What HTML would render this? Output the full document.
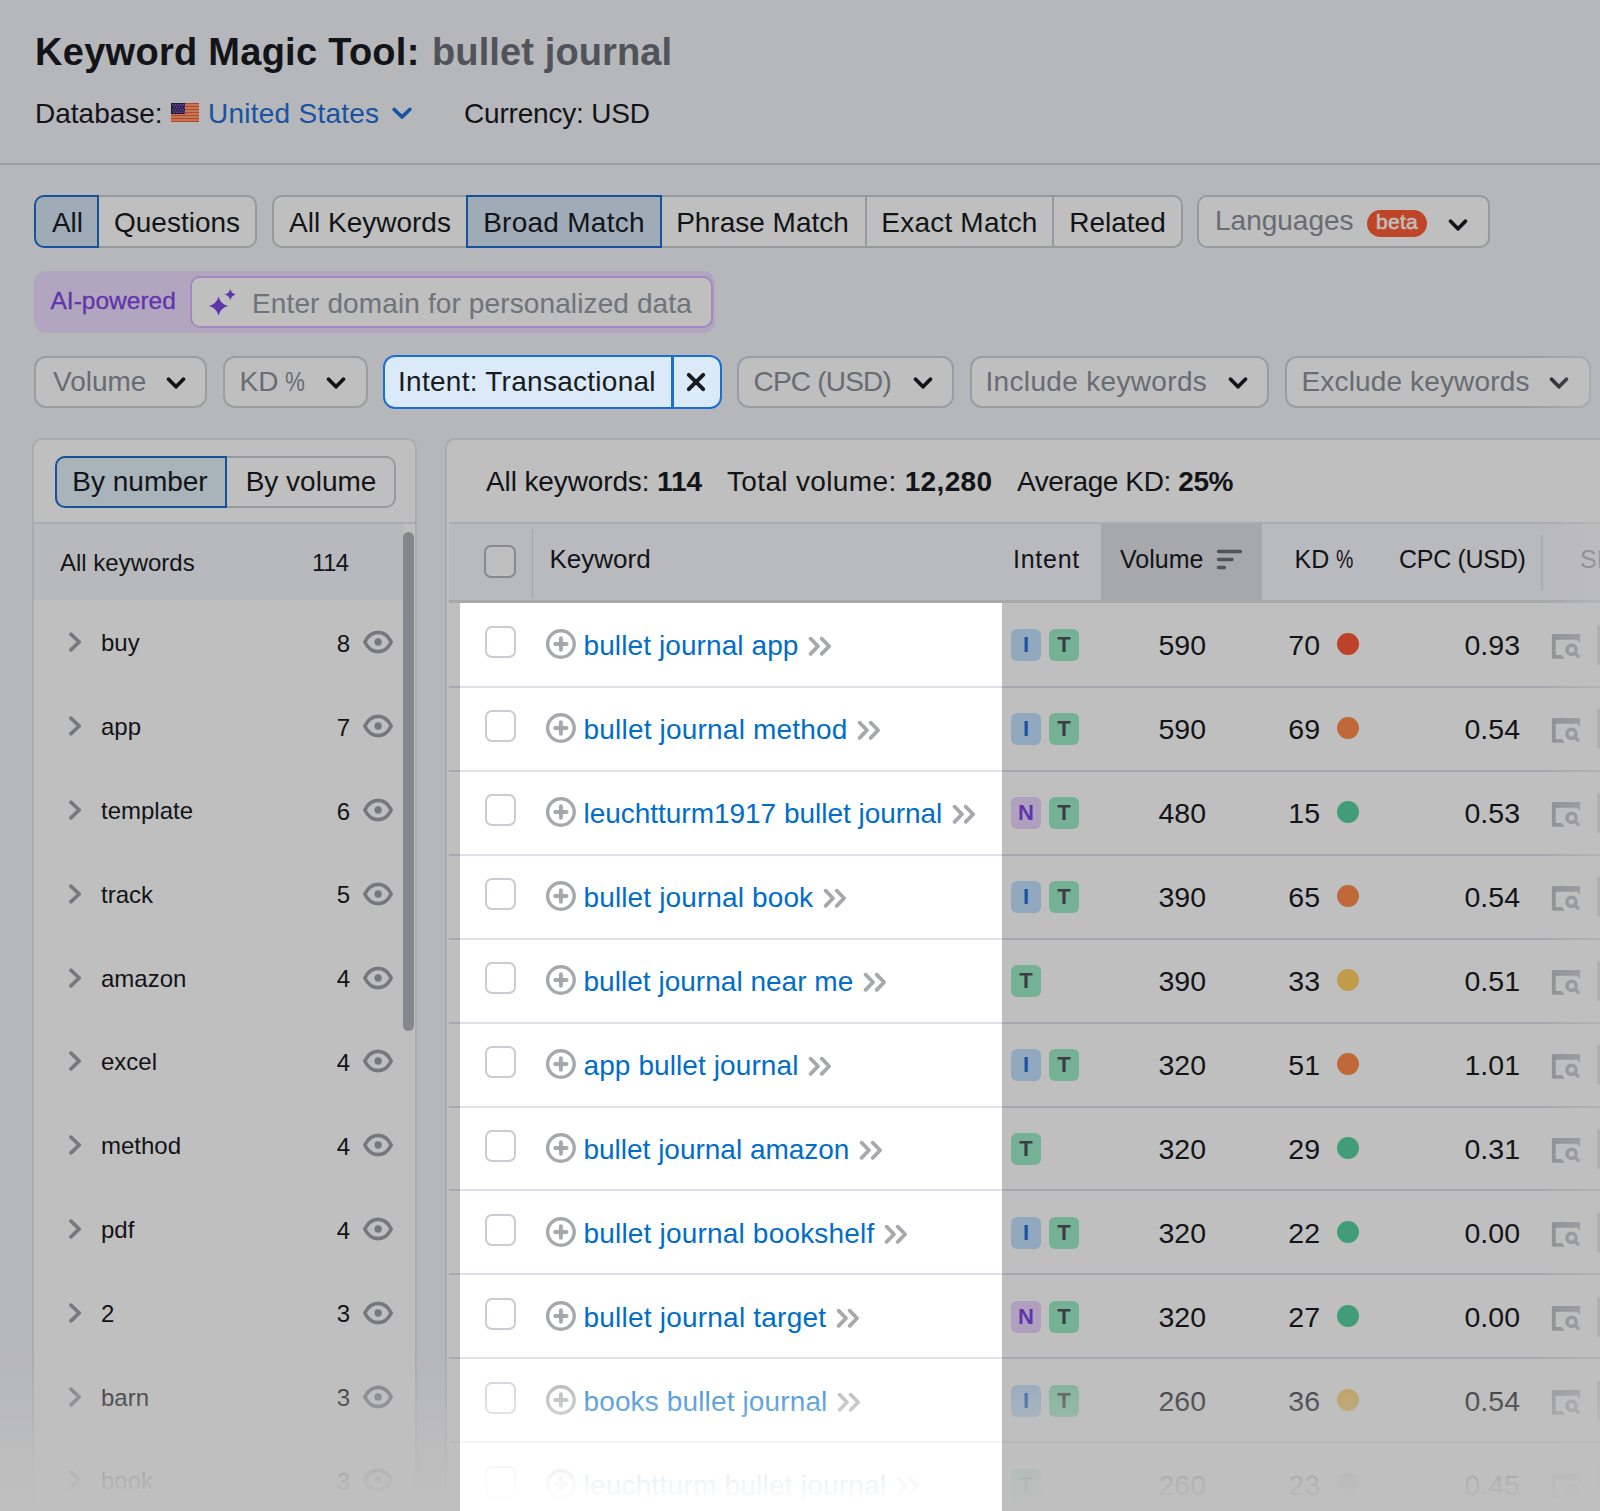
<!DOCTYPE html>
<html><head><meta charset="utf-8">
<style>
*{box-sizing:border-box;margin:0;padding:0}
html,body{width:1600px;height:1511px;overflow:hidden}
body{position:relative;background:#f3f4f9;font-family:"Liberation Sans",sans-serif;color:#191b23}
.a{position:absolute}
.t{position:absolute;white-space:nowrap}
.seg{position:absolute;top:0;height:100%;border:2px solid #c9ccd3;background:#fff;font-size:28px;display:flex;align-items:center;justify-content:center;color:#191b23;padding-top:2px}
.sel{background:#d5e5f5;border-color:#1b6fd0;z-index:2}
.flt{position:absolute;z-index:0;top:356px;height:52px;border:2px solid #cfd2d8;border-radius:12px;background:#fff;font-size:28px;color:#8c9099}
.flt .lbl{position:absolute;left:17px;top:0;line-height:48px}
</style></head><body>

<div class="t" style="left:35px;top:31.8px;font-size:38px;line-height:40px;font-weight:bold;color:#191b23;letter-spacing:0.28px">Keyword Magic Tool:</div>
<div class="t" style="left:432px;top:31.8px;font-size:38px;line-height:40px;font-weight:bold;color:#6b7178;letter-spacing:0.12px">bullet journal</div>
<div class="t" style="left:35px;top:93.6px;font-size:28px;line-height:40px;color:#191b23">Database:</div>
<svg class="a" style="left:171px;top:103px" width="28" height="19" viewBox="0 0 28 19"><rect x="0" y="0.000" width="28" height="1.472" fill="#ff5436"/><rect x="0" y="2.923" width="28" height="1.472" fill="#ff5436"/><rect x="0" y="5.846" width="28" height="1.472" fill="#ff5436"/><rect x="0" y="8.769" width="28" height="1.472" fill="#ff5436"/><rect x="0" y="11.692" width="28" height="1.472" fill="#ff5436"/><rect x="0" y="14.615" width="28" height="1.472" fill="#ff5436"/><rect x="0" y="17.538" width="28" height="1.472" fill="#ff5436"/><rect x="0" y="0" width="28" height="19" fill="#ff5436" opacity="0"/><rect x="0" y="1.462" width="28" height="1.462" fill="#ff9a5a"/><rect x="0" y="4.385" width="28" height="1.462" fill="#ff9a5a"/><rect x="0" y="7.308" width="28" height="1.462" fill="#ff9a5a"/><rect x="0" y="10.231" width="28" height="1.462" fill="#ff9a5a"/><rect x="0" y="13.154" width="28" height="1.462" fill="#ff9a5a"/><rect x="0" y="16.077" width="28" height="1.462" fill="#ff9a5a"/><rect x="0" y="0" width="14" height="11" fill="#2a2a3a"/><circle cx="2.00" cy="2.00" r="0.9" fill="#9b5cff"/><circle cx="4.60" cy="2.00" r="0.9" fill="#9b5cff"/><circle cx="7.20" cy="2.00" r="0.9" fill="#9b5cff"/><circle cx="9.80" cy="2.00" r="0.9" fill="#9b5cff"/><circle cx="12.40" cy="2.00" r="0.9" fill="#9b5cff"/><circle cx="3.30" cy="4.40" r="0.9" fill="#9b5cff"/><circle cx="5.90" cy="4.40" r="0.9" fill="#9b5cff"/><circle cx="8.50" cy="4.40" r="0.9" fill="#9b5cff"/><circle cx="11.10" cy="4.40" r="0.9" fill="#9b5cff"/><circle cx="13.70" cy="4.40" r="0.9" fill="#9b5cff"/><circle cx="2.00" cy="6.80" r="0.9" fill="#9b5cff"/><circle cx="4.60" cy="6.80" r="0.9" fill="#9b5cff"/><circle cx="7.20" cy="6.80" r="0.9" fill="#9b5cff"/><circle cx="9.80" cy="6.80" r="0.9" fill="#9b5cff"/><circle cx="12.40" cy="6.80" r="0.9" fill="#9b5cff"/><circle cx="3.30" cy="9.20" r="0.9" fill="#9b5cff"/><circle cx="5.90" cy="9.20" r="0.9" fill="#9b5cff"/><circle cx="8.50" cy="9.20" r="0.9" fill="#9b5cff"/><circle cx="11.10" cy="9.20" r="0.9" fill="#9b5cff"/><circle cx="13.70" cy="9.20" r="0.9" fill="#9b5cff"/></svg>
<div class="t" style="left:208px;top:93.6px;font-size:28px;line-height:40px;color:#226fd8;letter-spacing:0.25px">United States</div>
<svg class="a" style="left:390px;top:105px" width="24" height="16" viewBox="0 0 24 16"><path d="M4.2 4.5 L12 12 L19.8 4.5" fill="none" stroke="#226fd8" stroke-width="3.8" stroke-linecap="round" stroke-linejoin="round"/></svg>
<div class="t" style="left:464px;top:93.6px;font-size:28px;line-height:40px;color:#191b23;letter-spacing:-0.2px">Currency: USD</div>
<div class="a" style="left:0;top:163px;width:1600px;height:2px;background:#cdd0d5"></div>
<div class="a" style="left:34px;top:195px;width:223px;height:53px">
 <div class="seg sel" style="left:0;width:65px;border-radius:10px 0 0 10px;padding-left:2px">All</div>
 <div class="seg" style="left:63px;width:160px;border-left:none;border-radius:0 10px 10px 0;padding-left:2px">Questions</div>
</div>
<div class="a" style="left:272px;top:195px;width:911px;height:53px">
 <div class="seg" style="left:0;width:196px;border-radius:10px 0 0 10px">All Keywords</div>
 <div class="seg sel" style="left:194px;width:196px;letter-spacing:0.27px">Broad Match</div>
 <div class="seg" style="left:388px;width:207px;border-left:none">Phrase Match</div>
 <div class="seg" style="left:593px;width:189px;letter-spacing:0.2px">Exact Match</div>
 <div class="seg" style="left:780px;width:131px;border-radius:0 10px 10px 0">Related</div>
</div>
<div class="a" style="left:1197px;top:195px;width:293px;height:53px;border:2px solid #c9ccd3;border-radius:10px;background:#fff">
 <div class="t" style="left:16px;top:-1px;line-height:49px;font-size:28px;color:#8c9099">Languages</div>
 <div class="a" style="left:168px;top:12.5px;width:60px;height:27px;border-radius:14px;background:#ff5d36;color:#fff;font-size:21px;line-height:23px;text-align:center;-webkit-text-stroke:0.5px #fff;letter-spacing:0.3px">beta</div>
<svg class="a" style="left:249px;top:20.5px" width="20" height="14" viewBox="0 0 20 14"><path d="M2.6 3.2 L10 10.8 L17.4 3.2" fill="none" stroke="#191b23" stroke-width="3.7" stroke-linecap="round" stroke-linejoin="round"/></svg>
</div>
<div class="a" style="left:34px;top:271px;width:681px;height:62px;border-radius:12px;background:#ecdcff"></div>
<div class="t" style="left:50.5px;top:284px;line-height:34px;font-size:24.5px;color:#8047e6;-webkit-text-stroke:0.3px #8047e6">AI-powered</div>
<div class="a" style="left:190px;top:276px;width:523px;height:52px;border:2px solid #d8b9ff;border-radius:10px;background:#fff"></div>
<svg class="a" style="left:200px;top:285px" width="40" height="35" viewBox="0 0 40 35"><path d="M18.5 11.5 Q20.44 19.1 28.2 21 Q20.44 22.9 18.5 30.5 Q16.56 22.9 8.8 21 Q16.56 19.1 18.5 11.5Z" fill="#8047e6"/><path d="M30.3 4.0 Q31.42 8.48 35.9 9.6 Q31.42 10.719999999999999 30.3 15.2 Q29.18 10.719999999999999 24.700000000000003 9.6 Q29.18 8.48 30.3 4.0Z" fill="#8047e6"/></svg>
<div class="t" style="left:252px;top:277px;line-height:54px;font-size:28px;color:#969aa2;letter-spacing:0.12px">Enter domain for personalized data</div>
<div class="flt" style="left:34px;width:173px"><div class="lbl" style="left:17px;">Volume</div><svg class="a" style="left:129.5px;top:17.5px" width="20" height="14" viewBox="0 0 20 14"><path d="M2.6 3.2 L10 10.8 L17.4 3.2" fill="none" stroke="#191b23" stroke-width="3.7" stroke-linecap="round" stroke-linejoin="round"/></svg></div>
<div class="flt" style="left:223px;width:145px"><div class="lbl" style="left:14.5px;">KD<span style="position:absolute;left:45px;top:0;transform:scaleX(0.8);transform-origin:0 0">%</span></div><svg class="a" style="left:100.5px;top:17.5px" width="20" height="14" viewBox="0 0 20 14"><path d="M2.6 3.2 L10 10.8 L17.4 3.2" fill="none" stroke="#191b23" stroke-width="3.7" stroke-linecap="round" stroke-linejoin="round"/></svg></div>
<div class="flt" style="left:383px;top:355px;height:54px;width:339px;border-color:#1b6fd0;background:#dbeaf8;color:#191b23"><div class="lbl" style="left:13px;line-height:50px;letter-spacing:0.27px">Intent: Transactional</div><div class="a" style="left:286px;top:0;width:3px;height:50px;background:#1b6fd0"></div><svg class="a" style="left:300px;top:14px" width="22" height="22" viewBox="0 0 22 22"><path d="M3.8 3.8 L18.2 18.2 M18.2 3.8 L3.8 18.2" stroke="#191b23" stroke-width="4" stroke-linecap="round"/></svg></div>
<div class="flt" style="left:737px;width:217px"><div class="lbl" style="left:14.5px;letter-spacing:-0.8px">CPC (USD)</div><svg class="a" style="left:174px;top:17.5px" width="20" height="14" viewBox="0 0 20 14"><path d="M2.6 3.2 L10 10.8 L17.4 3.2" fill="none" stroke="#191b23" stroke-width="3.7" stroke-linecap="round" stroke-linejoin="round"/></svg></div>
<div class="flt" style="left:970px;width:299px"><div class="lbl" style="left:13.5px;letter-spacing:0.33px">Include keywords</div><svg class="a" style="left:256px;top:17.5px" width="20" height="14" viewBox="0 0 20 14"><path d="M2.6 3.2 L10 10.8 L17.4 3.2" fill="none" stroke="#191b23" stroke-width="3.7" stroke-linecap="round" stroke-linejoin="round"/></svg></div>
<div class="flt" style="left:1285px;width:306px"><div class="lbl" style="left:14.5px;letter-spacing:0.15px">Exclude keywords</div><svg class="a" style="left:262px;top:17.5px" width="20" height="14" viewBox="0 0 20 14"><path d="M2.6 3.2 L10 10.8 L17.4 3.2" fill="none" stroke="#191b23" stroke-width="3.7" stroke-linecap="round" stroke-linejoin="round"/></svg></div>
<div class="a" style="left:32px;top:438px;width:385px;height:1200px;border:2px solid #e3e5ea;border-radius:10px;background:#fff"></div>
<div class="a" style="left:55px;top:456px;width:341px;height:52px;border:2px solid #c9ccd3;border-radius:10px;background:#fff"></div>
<div class="a" style="left:55px;top:456px;width:172px;height:52px;border:2px solid #1b6fd0;border-radius:10px 0 0 10px;background:#e1eff9"></div>
<div class="t" style="left:54px;top:456px;width:172px;line-height:52px;text-align:center;font-size:28px">By number</div>
<div class="t" style="left:226px;top:456px;width:170px;line-height:52px;text-align:center;font-size:28px">By volume</div>
<div class="a" style="left:34px;top:522px;width:381px;height:2px;background:#e4e6ea"></div>
<div class="a" style="left:34px;top:524px;width:369px;height:76px;background:#f6f7fb"></div>
<div class="t" style="left:60px;top:545.5px;line-height:34px;font-size:24px">All keywords</div>
<div class="t" style="left:248.5px;top:545.5px;width:100px;text-align:right;line-height:34px;font-size:24px;letter-spacing:-0.6px">114</div>
<div class="a" style="left:403px;top:532px;width:11px;height:499px;border-radius:6px;background:#b2b4ba"></div>
<div class="t" style="left:101px;top:626.3px;line-height:34px;font-size:24px">buy</div>
<div class="t" style="left:250px;top:627.0px;width:100px;text-align:right;line-height:34px;font-size:24px">8</div>
<svg class="a" style="left:60px;top:627.40px" width="30" height="30" viewBox="0 0 30 30"><path d="M10.9 7.2 L19.2 15 L10.9 22.8" fill="none" stroke="#9ea1a9" stroke-width="3.7" stroke-linecap="round" stroke-linejoin="round"/></svg>
<svg class="a" style="left:360px;top:627.40px" width="36" height="30" viewBox="0 0 36 30"><path d="M4.8 15 C11 2.2 25.2 2.2 31.2 15 C25.2 27.8 11 27.8 4.8 15Z" fill="none" stroke="#9ea1a9" stroke-width="3.6" stroke-linejoin="round"/><circle cx="18.1" cy="15" r="3.65" fill="#9ea1a9"/></svg>
<div class="t" style="left:101px;top:710.1px;line-height:34px;font-size:24px">app</div>
<div class="t" style="left:250px;top:710.8px;width:100px;text-align:right;line-height:34px;font-size:24px">7</div>
<svg class="a" style="left:60px;top:711.20px" width="30" height="30" viewBox="0 0 30 30"><path d="M10.9 7.2 L19.2 15 L10.9 22.8" fill="none" stroke="#9ea1a9" stroke-width="3.7" stroke-linecap="round" stroke-linejoin="round"/></svg>
<svg class="a" style="left:360px;top:711.20px" width="36" height="30" viewBox="0 0 36 30"><path d="M4.8 15 C11 2.2 25.2 2.2 31.2 15 C25.2 27.8 11 27.8 4.8 15Z" fill="none" stroke="#9ea1a9" stroke-width="3.6" stroke-linejoin="round"/><circle cx="18.1" cy="15" r="3.65" fill="#9ea1a9"/></svg>
<div class="t" style="left:101px;top:793.9px;line-height:34px;font-size:24px">template</div>
<div class="t" style="left:250px;top:794.6px;width:100px;text-align:right;line-height:34px;font-size:24px">6</div>
<svg class="a" style="left:60px;top:795.00px" width="30" height="30" viewBox="0 0 30 30"><path d="M10.9 7.2 L19.2 15 L10.9 22.8" fill="none" stroke="#9ea1a9" stroke-width="3.7" stroke-linecap="round" stroke-linejoin="round"/></svg>
<svg class="a" style="left:360px;top:795.00px" width="36" height="30" viewBox="0 0 36 30"><path d="M4.8 15 C11 2.2 25.2 2.2 31.2 15 C25.2 27.8 11 27.8 4.8 15Z" fill="none" stroke="#9ea1a9" stroke-width="3.6" stroke-linejoin="round"/><circle cx="18.1" cy="15" r="3.65" fill="#9ea1a9"/></svg>
<div class="t" style="left:101px;top:877.7px;line-height:34px;font-size:24px">track</div>
<div class="t" style="left:250px;top:878.4px;width:100px;text-align:right;line-height:34px;font-size:24px">5</div>
<svg class="a" style="left:60px;top:878.80px" width="30" height="30" viewBox="0 0 30 30"><path d="M10.9 7.2 L19.2 15 L10.9 22.8" fill="none" stroke="#9ea1a9" stroke-width="3.7" stroke-linecap="round" stroke-linejoin="round"/></svg>
<svg class="a" style="left:360px;top:878.80px" width="36" height="30" viewBox="0 0 36 30"><path d="M4.8 15 C11 2.2 25.2 2.2 31.2 15 C25.2 27.8 11 27.8 4.8 15Z" fill="none" stroke="#9ea1a9" stroke-width="3.6" stroke-linejoin="round"/><circle cx="18.1" cy="15" r="3.65" fill="#9ea1a9"/></svg>
<div class="t" style="left:101px;top:961.5px;line-height:34px;font-size:24px">amazon</div>
<div class="t" style="left:250px;top:962.2px;width:100px;text-align:right;line-height:34px;font-size:24px">4</div>
<svg class="a" style="left:60px;top:962.60px" width="30" height="30" viewBox="0 0 30 30"><path d="M10.9 7.2 L19.2 15 L10.9 22.8" fill="none" stroke="#9ea1a9" stroke-width="3.7" stroke-linecap="round" stroke-linejoin="round"/></svg>
<svg class="a" style="left:360px;top:962.60px" width="36" height="30" viewBox="0 0 36 30"><path d="M4.8 15 C11 2.2 25.2 2.2 31.2 15 C25.2 27.8 11 27.8 4.8 15Z" fill="none" stroke="#9ea1a9" stroke-width="3.6" stroke-linejoin="round"/><circle cx="18.1" cy="15" r="3.65" fill="#9ea1a9"/></svg>
<div class="t" style="left:101px;top:1045.3px;line-height:34px;font-size:24px">excel</div>
<div class="t" style="left:250px;top:1046.0px;width:100px;text-align:right;line-height:34px;font-size:24px">4</div>
<svg class="a" style="left:60px;top:1046.40px" width="30" height="30" viewBox="0 0 30 30"><path d="M10.9 7.2 L19.2 15 L10.9 22.8" fill="none" stroke="#9ea1a9" stroke-width="3.7" stroke-linecap="round" stroke-linejoin="round"/></svg>
<svg class="a" style="left:360px;top:1046.40px" width="36" height="30" viewBox="0 0 36 30"><path d="M4.8 15 C11 2.2 25.2 2.2 31.2 15 C25.2 27.8 11 27.8 4.8 15Z" fill="none" stroke="#9ea1a9" stroke-width="3.6" stroke-linejoin="round"/><circle cx="18.1" cy="15" r="3.65" fill="#9ea1a9"/></svg>
<div class="t" style="left:101px;top:1129.1px;line-height:34px;font-size:24px">method</div>
<div class="t" style="left:250px;top:1129.8px;width:100px;text-align:right;line-height:34px;font-size:24px">4</div>
<svg class="a" style="left:60px;top:1130.20px" width="30" height="30" viewBox="0 0 30 30"><path d="M10.9 7.2 L19.2 15 L10.9 22.8" fill="none" stroke="#9ea1a9" stroke-width="3.7" stroke-linecap="round" stroke-linejoin="round"/></svg>
<svg class="a" style="left:360px;top:1130.20px" width="36" height="30" viewBox="0 0 36 30"><path d="M4.8 15 C11 2.2 25.2 2.2 31.2 15 C25.2 27.8 11 27.8 4.8 15Z" fill="none" stroke="#9ea1a9" stroke-width="3.6" stroke-linejoin="round"/><circle cx="18.1" cy="15" r="3.65" fill="#9ea1a9"/></svg>
<div class="t" style="left:101px;top:1212.9px;line-height:34px;font-size:24px">pdf</div>
<div class="t" style="left:250px;top:1213.6px;width:100px;text-align:right;line-height:34px;font-size:24px">4</div>
<svg class="a" style="left:60px;top:1214.00px" width="30" height="30" viewBox="0 0 30 30"><path d="M10.9 7.2 L19.2 15 L10.9 22.8" fill="none" stroke="#9ea1a9" stroke-width="3.7" stroke-linecap="round" stroke-linejoin="round"/></svg>
<svg class="a" style="left:360px;top:1214.00px" width="36" height="30" viewBox="0 0 36 30"><path d="M4.8 15 C11 2.2 25.2 2.2 31.2 15 C25.2 27.8 11 27.8 4.8 15Z" fill="none" stroke="#9ea1a9" stroke-width="3.6" stroke-linejoin="round"/><circle cx="18.1" cy="15" r="3.65" fill="#9ea1a9"/></svg>
<div class="t" style="left:101px;top:1296.7px;line-height:34px;font-size:24px">2</div>
<div class="t" style="left:250px;top:1297.4px;width:100px;text-align:right;line-height:34px;font-size:24px">3</div>
<svg class="a" style="left:60px;top:1297.80px" width="30" height="30" viewBox="0 0 30 30"><path d="M10.9 7.2 L19.2 15 L10.9 22.8" fill="none" stroke="#9ea1a9" stroke-width="3.7" stroke-linecap="round" stroke-linejoin="round"/></svg>
<svg class="a" style="left:360px;top:1297.80px" width="36" height="30" viewBox="0 0 36 30"><path d="M4.8 15 C11 2.2 25.2 2.2 31.2 15 C25.2 27.8 11 27.8 4.8 15Z" fill="none" stroke="#9ea1a9" stroke-width="3.6" stroke-linejoin="round"/><circle cx="18.1" cy="15" r="3.65" fill="#9ea1a9"/></svg>
<div class="t" style="left:101px;top:1380.5px;line-height:34px;font-size:24px">barn</div>
<div class="t" style="left:250px;top:1381.2px;width:100px;text-align:right;line-height:34px;font-size:24px">3</div>
<svg class="a" style="left:60px;top:1381.60px" width="30" height="30" viewBox="0 0 30 30"><path d="M10.9 7.2 L19.2 15 L10.9 22.8" fill="none" stroke="#9ea1a9" stroke-width="3.7" stroke-linecap="round" stroke-linejoin="round"/></svg>
<svg class="a" style="left:360px;top:1381.60px" width="36" height="30" viewBox="0 0 36 30"><path d="M4.8 15 C11 2.2 25.2 2.2 31.2 15 C25.2 27.8 11 27.8 4.8 15Z" fill="none" stroke="#9ea1a9" stroke-width="3.6" stroke-linejoin="round"/><circle cx="18.1" cy="15" r="3.65" fill="#9ea1a9"/></svg>
<div class="t" style="left:101px;top:1464.3px;line-height:34px;font-size:24px">book</div>
<div class="t" style="left:250px;top:1465.0px;width:100px;text-align:right;line-height:34px;font-size:24px">3</div>
<svg class="a" style="left:60px;top:1465.40px" width="30" height="30" viewBox="0 0 30 30"><path d="M10.9 7.2 L19.2 15 L10.9 22.8" fill="none" stroke="#9ea1a9" stroke-width="3.7" stroke-linecap="round" stroke-linejoin="round"/></svg>
<svg class="a" style="left:360px;top:1465.40px" width="36" height="30" viewBox="0 0 36 30"><path d="M4.8 15 C11 2.2 25.2 2.2 31.2 15 C25.2 27.8 11 27.8 4.8 15Z" fill="none" stroke="#9ea1a9" stroke-width="3.6" stroke-linejoin="round"/><circle cx="18.1" cy="15" r="3.65" fill="#9ea1a9"/></svg>
<div class="a" style="left:445px;top:438px;width:1200px;height:1200px;border:2px solid #e3e5ea;border-radius:10px;background:#fff"></div>
<div class="t" style="left:486px;top:464px;line-height:36px;font-size:28px;letter-spacing:-0.12px">All keywords: <b>114</b></div>
<div class="t" style="left:727px;top:464px;line-height:36px;font-size:28px;letter-spacing:0.35px">Total volume: <b>12,280</b></div>
<div class="t" style="left:1017px;top:464px;line-height:36px;font-size:28px;letter-spacing:-0.4px">Average KD: <b>25%</b></div>
<div class="a" style="left:449px;top:522px;width:1151px;height:2px;background:#e4e6ea"></div>
<div class="a" style="left:449px;top:524px;width:1151px;height:77px;background:#f7f8fc"></div>
<div class="a" style="left:1101px;top:524px;width:161px;height:77px;background:#dfe1e6"></div>
<div class="a" style="left:449px;top:600px;width:1151px;height:3px;background:#dfe1e6"></div>
<div class="a" style="left:484px;top:545px;width:32px;height:33px;border:2px solid #b4b7be;border-radius:7px;background:#fff"></div>
<div class="a" style="left:532px;top:529px;width:1px;height:68px;background:#dadce2"></div>
<div class="t" style="left:549.5px;top:542.5px;line-height:32px;font-size:26px">Keyword</div>
<div class="t" style="left:1013px;top:542.5px;line-height:32px;font-size:25px;letter-spacing:0.75px">Intent</div>
<div class="t" style="left:1120px;top:542.5px;line-height:32px;font-size:25px">Volume</div>
<svg class="a" style="left:1215px;top:548px" width="28" height="22" viewBox="0 0 28 22"><path d="M3.5 3.5 H25.5 M3.5 11.5 H17 M3.5 19.5 H9.5" stroke="#6c6f77" stroke-width="3.4" stroke-linecap="round"/></svg>
<div class="t" style="left:1294.5px;top:542.5px;line-height:32px;font-size:25px">KD</div><div class="t" style="left:1336px;top:542.5px;line-height:32px;font-size:25px;transform:scaleX(0.78);transform-origin:0 0">%</div>
<div class="t" style="left:1399px;top:542.5px;line-height:32px;font-size:25px;letter-spacing:-0.3px">CPC (USD)</div>
<div class="a" style="left:1541px;top:535px;width:2px;height:55px;background:#e4e6ea"></div>
<div class="t" style="left:1580px;top:542.5px;line-height:32px;font-size:25px;color:#9a9ea6">SF</div>
<div class="a" style="left:449px;top:686px;width:1151px;height:2px;background:#dde0e8"></div>
<div class="a" style="left:485px;top:626px;width:31px;height:32px;border:2px solid #c9ccd3;border-radius:7px;background:#fff"></div>
<svg class="a" style="left:545px;top:628px" width="32" height="32" viewBox="0 0 32 32"><circle cx="15.9" cy="16" r="13.3" fill="none" stroke="#a6a8ad" stroke-width="3.4"/><path d="M15.9 10.3 V21.7 M10.2 16 H21.6" stroke="#a6a8ad" stroke-width="3.9" stroke-linecap="round"/></svg>
<div class="t" style="left:583.5px;top:626.0px;line-height:40px;font-size:28px;color:#006dca;letter-spacing:0.098px">bullet journal app<svg style="margin-left:9.5px;vertical-align:-1px" width="26" height="20" viewBox="0 0 26 20"><path d="M2.6 2.6 L10 10.2 L2.6 17.9 M13.7 2.6 L21.1 10.2 L13.7 17.9" fill="none" stroke="#a6a8ad" stroke-width="3.7" stroke-linecap="round" stroke-linejoin="round"/></svg></div>
<div class="a" style="left:1011px;top:629.0px;width:30px;height:32px;border-radius:6px;background:#c2e0ff;color:#226fd8;font-size:22px;font-weight:bold;line-height:32px;text-align:center">I</div>
<div class="a" style="left:1049px;top:629.0px;width:30px;height:32px;border-radius:6px;background:#9cedc7;color:#50565c;font-size:22px;font-weight:bold;line-height:32px;text-align:center">T</div>
<div class="t" style="left:1106px;top:625.3px;width:100px;text-align:right;line-height:40px;font-size:28.5px">590</div>
<div class="t" style="left:1220px;top:625.3px;width:100px;text-align:right;line-height:40px;font-size:28.5px">70</div>
<div class="t" style="left:1420px;top:625.3px;width:100px;text-align:right;line-height:40px;font-size:28.5px">0.93</div>
<div class="a" style="left:1337px;top:633px;width:22px;height:22px;border-radius:50%;background:#fc5838"></div>
<svg class="a" style="left:1550px;top:632px" width="32" height="30" viewBox="0 0 32 30"><g fill="#babdc4"><path d="M3 1.9 H29 Q30.15 1.9 30.15 3 V10.9 L27.2 7.8 H5.7 V23 H11.7 L14.7 26.65 H3 Q1.9 26.65 1.9 25.5 V3 Q1.9 1.9 3 1.9Z"/></g><circle cx="21.6" cy="17.8" r="4.55" fill="none" stroke="#babdc4" stroke-width="3.5"/><path d="M24.8 21 L28 24.2" stroke="#babdc4" stroke-width="3.5" stroke-linecap="round"/></svg>
<div class="a" style="left:1597px;top:625px;width:3px;height:40px;background:#d5d8de"></div>
<div class="a" style="left:449px;top:770px;width:1151px;height:2px;background:#dde0e8"></div>
<div class="a" style="left:485px;top:710px;width:31px;height:32px;border:2px solid #c9ccd3;border-radius:7px;background:#fff"></div>
<svg class="a" style="left:545px;top:712px" width="32" height="32" viewBox="0 0 32 32"><circle cx="15.9" cy="16" r="13.3" fill="none" stroke="#a6a8ad" stroke-width="3.4"/><path d="M15.9 10.3 V21.7 M10.2 16 H21.6" stroke="#a6a8ad" stroke-width="3.9" stroke-linecap="round"/></svg>
<div class="t" style="left:583.5px;top:710.0px;line-height:40px;font-size:28px;color:#006dca;letter-spacing:0.199px">bullet journal method<svg style="margin-left:9.5px;vertical-align:-1px" width="26" height="20" viewBox="0 0 26 20"><path d="M2.6 2.6 L10 10.2 L2.6 17.9 M13.7 2.6 L21.1 10.2 L13.7 17.9" fill="none" stroke="#a6a8ad" stroke-width="3.7" stroke-linecap="round" stroke-linejoin="round"/></svg></div>
<div class="a" style="left:1011px;top:713.0px;width:30px;height:32px;border-radius:6px;background:#c2e0ff;color:#226fd8;font-size:22px;font-weight:bold;line-height:32px;text-align:center">I</div>
<div class="a" style="left:1049px;top:713.0px;width:30px;height:32px;border-radius:6px;background:#9cedc7;color:#50565c;font-size:22px;font-weight:bold;line-height:32px;text-align:center">T</div>
<div class="t" style="left:1106px;top:709.3px;width:100px;text-align:right;line-height:40px;font-size:28.5px">590</div>
<div class="t" style="left:1220px;top:709.3px;width:100px;text-align:right;line-height:40px;font-size:28.5px">69</div>
<div class="t" style="left:1420px;top:709.3px;width:100px;text-align:right;line-height:40px;font-size:28.5px">0.54</div>
<div class="a" style="left:1337px;top:717px;width:22px;height:22px;border-radius:50%;background:#ff8b4d"></div>
<svg class="a" style="left:1550px;top:716px" width="32" height="30" viewBox="0 0 32 30"><g fill="#babdc4"><path d="M3 1.9 H29 Q30.15 1.9 30.15 3 V10.9 L27.2 7.8 H5.7 V23 H11.7 L14.7 26.65 H3 Q1.9 26.65 1.9 25.5 V3 Q1.9 1.9 3 1.9Z"/></g><circle cx="21.6" cy="17.8" r="4.55" fill="none" stroke="#babdc4" stroke-width="3.5"/><path d="M24.8 21 L28 24.2" stroke="#babdc4" stroke-width="3.5" stroke-linecap="round"/></svg>
<div class="a" style="left:1597px;top:709px;width:3px;height:40px;background:#d5d8de"></div>
<div class="a" style="left:449px;top:854px;width:1151px;height:2px;background:#dde0e8"></div>
<div class="a" style="left:485px;top:794px;width:31px;height:32px;border:2px solid #c9ccd3;border-radius:7px;background:#fff"></div>
<svg class="a" style="left:545px;top:796px" width="32" height="32" viewBox="0 0 32 32"><circle cx="15.9" cy="16" r="13.3" fill="none" stroke="#a6a8ad" stroke-width="3.4"/><path d="M15.9 10.3 V21.7 M10.2 16 H21.6" stroke="#a6a8ad" stroke-width="3.9" stroke-linecap="round"/></svg>
<div class="t" style="left:583.5px;top:794.0px;line-height:40px;font-size:28px;color:#006dca;letter-spacing:-0.026px">leuchtturm1917 bullet journal<svg style="margin-left:9.5px;vertical-align:-1px" width="26" height="20" viewBox="0 0 26 20"><path d="M2.6 2.6 L10 10.2 L2.6 17.9 M13.7 2.6 L21.1 10.2 L13.7 17.9" fill="none" stroke="#a6a8ad" stroke-width="3.7" stroke-linecap="round" stroke-linejoin="round"/></svg></div>
<div class="a" style="left:1011px;top:797.0px;width:30px;height:32px;border-radius:6px;background:#ead6ff;color:#8047e6;font-size:22px;font-weight:bold;line-height:32px;text-align:center">N</div>
<div class="a" style="left:1049px;top:797.0px;width:30px;height:32px;border-radius:6px;background:#9cedc7;color:#50565c;font-size:22px;font-weight:bold;line-height:32px;text-align:center">T</div>
<div class="t" style="left:1106px;top:793.3px;width:100px;text-align:right;line-height:40px;font-size:28.5px">480</div>
<div class="t" style="left:1220px;top:793.3px;width:100px;text-align:right;line-height:40px;font-size:28.5px">15</div>
<div class="t" style="left:1420px;top:793.3px;width:100px;text-align:right;line-height:40px;font-size:28.5px">0.53</div>
<div class="a" style="left:1337px;top:801px;width:22px;height:22px;border-radius:50%;background:#5ad1a2"></div>
<svg class="a" style="left:1550px;top:800px" width="32" height="30" viewBox="0 0 32 30"><g fill="#babdc4"><path d="M3 1.9 H29 Q30.15 1.9 30.15 3 V10.9 L27.2 7.8 H5.7 V23 H11.7 L14.7 26.65 H3 Q1.9 26.65 1.9 25.5 V3 Q1.9 1.9 3 1.9Z"/></g><circle cx="21.6" cy="17.8" r="4.55" fill="none" stroke="#babdc4" stroke-width="3.5"/><path d="M24.8 21 L28 24.2" stroke="#babdc4" stroke-width="3.5" stroke-linecap="round"/></svg>
<div class="a" style="left:1597px;top:793px;width:3px;height:40px;background:#d5d8de"></div>
<div class="a" style="left:449px;top:938px;width:1151px;height:2px;background:#dde0e8"></div>
<div class="a" style="left:485px;top:878px;width:31px;height:32px;border:2px solid #c9ccd3;border-radius:7px;background:#fff"></div>
<svg class="a" style="left:545px;top:880px" width="32" height="32" viewBox="0 0 32 32"><circle cx="15.9" cy="16" r="13.3" fill="none" stroke="#a6a8ad" stroke-width="3.4"/><path d="M15.9 10.3 V21.7 M10.2 16 H21.6" stroke="#a6a8ad" stroke-width="3.9" stroke-linecap="round"/></svg>
<div class="t" style="left:583.5px;top:878.0px;line-height:40px;font-size:28px;color:#006dca;letter-spacing:0.130px">bullet journal book<svg style="margin-left:9.5px;vertical-align:-1px" width="26" height="20" viewBox="0 0 26 20"><path d="M2.6 2.6 L10 10.2 L2.6 17.9 M13.7 2.6 L21.1 10.2 L13.7 17.9" fill="none" stroke="#a6a8ad" stroke-width="3.7" stroke-linecap="round" stroke-linejoin="round"/></svg></div>
<div class="a" style="left:1011px;top:881.0px;width:30px;height:32px;border-radius:6px;background:#c2e0ff;color:#226fd8;font-size:22px;font-weight:bold;line-height:32px;text-align:center">I</div>
<div class="a" style="left:1049px;top:881.0px;width:30px;height:32px;border-radius:6px;background:#9cedc7;color:#50565c;font-size:22px;font-weight:bold;line-height:32px;text-align:center">T</div>
<div class="t" style="left:1106px;top:877.3px;width:100px;text-align:right;line-height:40px;font-size:28.5px">390</div>
<div class="t" style="left:1220px;top:877.3px;width:100px;text-align:right;line-height:40px;font-size:28.5px">65</div>
<div class="t" style="left:1420px;top:877.3px;width:100px;text-align:right;line-height:40px;font-size:28.5px">0.54</div>
<div class="a" style="left:1337px;top:885px;width:22px;height:22px;border-radius:50%;background:#ff8b4d"></div>
<svg class="a" style="left:1550px;top:884px" width="32" height="30" viewBox="0 0 32 30"><g fill="#babdc4"><path d="M3 1.9 H29 Q30.15 1.9 30.15 3 V10.9 L27.2 7.8 H5.7 V23 H11.7 L14.7 26.65 H3 Q1.9 26.65 1.9 25.5 V3 Q1.9 1.9 3 1.9Z"/></g><circle cx="21.6" cy="17.8" r="4.55" fill="none" stroke="#babdc4" stroke-width="3.5"/><path d="M24.8 21 L28 24.2" stroke="#babdc4" stroke-width="3.5" stroke-linecap="round"/></svg>
<div class="a" style="left:1597px;top:877px;width:3px;height:40px;background:#d5d8de"></div>
<div class="a" style="left:449px;top:1022px;width:1151px;height:2px;background:#dde0e8"></div>
<div class="a" style="left:485px;top:962px;width:31px;height:32px;border:2px solid #c9ccd3;border-radius:7px;background:#fff"></div>
<svg class="a" style="left:545px;top:964px" width="32" height="32" viewBox="0 0 32 32"><circle cx="15.9" cy="16" r="13.3" fill="none" stroke="#a6a8ad" stroke-width="3.4"/><path d="M15.9 10.3 V21.7 M10.2 16 H21.6" stroke="#a6a8ad" stroke-width="3.9" stroke-linecap="round"/></svg>
<div class="t" style="left:583.5px;top:962.0px;line-height:40px;font-size:28px;color:#006dca;letter-spacing:0.025px">bullet journal near me<svg style="margin-left:9.5px;vertical-align:-1px" width="26" height="20" viewBox="0 0 26 20"><path d="M2.6 2.6 L10 10.2 L2.6 17.9 M13.7 2.6 L21.1 10.2 L13.7 17.9" fill="none" stroke="#a6a8ad" stroke-width="3.7" stroke-linecap="round" stroke-linejoin="round"/></svg></div>
<div class="a" style="left:1011px;top:965.0px;width:30px;height:32px;border-radius:6px;background:#9cedc7;color:#50565c;font-size:22px;font-weight:bold;line-height:32px;text-align:center">T</div>
<div class="t" style="left:1106px;top:961.3px;width:100px;text-align:right;line-height:40px;font-size:28.5px">390</div>
<div class="t" style="left:1220px;top:961.3px;width:100px;text-align:right;line-height:40px;font-size:28.5px">33</div>
<div class="t" style="left:1420px;top:961.3px;width:100px;text-align:right;line-height:40px;font-size:28.5px">0.51</div>
<div class="a" style="left:1337px;top:969px;width:22px;height:22px;border-radius:50%;background:#ffcf63"></div>
<svg class="a" style="left:1550px;top:968px" width="32" height="30" viewBox="0 0 32 30"><g fill="#babdc4"><path d="M3 1.9 H29 Q30.15 1.9 30.15 3 V10.9 L27.2 7.8 H5.7 V23 H11.7 L14.7 26.65 H3 Q1.9 26.65 1.9 25.5 V3 Q1.9 1.9 3 1.9Z"/></g><circle cx="21.6" cy="17.8" r="4.55" fill="none" stroke="#babdc4" stroke-width="3.5"/><path d="M24.8 21 L28 24.2" stroke="#babdc4" stroke-width="3.5" stroke-linecap="round"/></svg>
<div class="a" style="left:1597px;top:961px;width:3px;height:40px;background:#d5d8de"></div>
<div class="a" style="left:449px;top:1106px;width:1151px;height:2px;background:#dde0e8"></div>
<div class="a" style="left:485px;top:1046px;width:31px;height:32px;border:2px solid #c9ccd3;border-radius:7px;background:#fff"></div>
<svg class="a" style="left:545px;top:1048px" width="32" height="32" viewBox="0 0 32 32"><circle cx="15.9" cy="16" r="13.3" fill="none" stroke="#a6a8ad" stroke-width="3.4"/><path d="M15.9 10.3 V21.7 M10.2 16 H21.6" stroke="#a6a8ad" stroke-width="3.9" stroke-linecap="round"/></svg>
<div class="t" style="left:583.5px;top:1046.0px;line-height:40px;font-size:28px;color:#006dca;letter-spacing:0.098px">app bullet journal<svg style="margin-left:9.5px;vertical-align:-1px" width="26" height="20" viewBox="0 0 26 20"><path d="M2.6 2.6 L10 10.2 L2.6 17.9 M13.7 2.6 L21.1 10.2 L13.7 17.9" fill="none" stroke="#a6a8ad" stroke-width="3.7" stroke-linecap="round" stroke-linejoin="round"/></svg></div>
<div class="a" style="left:1011px;top:1049.0px;width:30px;height:32px;border-radius:6px;background:#c2e0ff;color:#226fd8;font-size:22px;font-weight:bold;line-height:32px;text-align:center">I</div>
<div class="a" style="left:1049px;top:1049.0px;width:30px;height:32px;border-radius:6px;background:#9cedc7;color:#50565c;font-size:22px;font-weight:bold;line-height:32px;text-align:center">T</div>
<div class="t" style="left:1106px;top:1045.3px;width:100px;text-align:right;line-height:40px;font-size:28.5px">320</div>
<div class="t" style="left:1220px;top:1045.3px;width:100px;text-align:right;line-height:40px;font-size:28.5px">51</div>
<div class="t" style="left:1420px;top:1045.3px;width:100px;text-align:right;line-height:40px;font-size:28.5px">1.01</div>
<div class="a" style="left:1337px;top:1053px;width:22px;height:22px;border-radius:50%;background:#ff8b4d"></div>
<svg class="a" style="left:1550px;top:1052px" width="32" height="30" viewBox="0 0 32 30"><g fill="#babdc4"><path d="M3 1.9 H29 Q30.15 1.9 30.15 3 V10.9 L27.2 7.8 H5.7 V23 H11.7 L14.7 26.65 H3 Q1.9 26.65 1.9 25.5 V3 Q1.9 1.9 3 1.9Z"/></g><circle cx="21.6" cy="17.8" r="4.55" fill="none" stroke="#babdc4" stroke-width="3.5"/><path d="M24.8 21 L28 24.2" stroke="#babdc4" stroke-width="3.5" stroke-linecap="round"/></svg>
<div class="a" style="left:1597px;top:1045px;width:3px;height:40px;background:#d5d8de"></div>
<div class="a" style="left:449px;top:1189px;width:1151px;height:2px;background:#dde0e8"></div>
<div class="a" style="left:485px;top:1130px;width:31px;height:32px;border:2px solid #c9ccd3;border-radius:7px;background:#fff"></div>
<svg class="a" style="left:545px;top:1132px" width="32" height="32" viewBox="0 0 32 32"><circle cx="15.9" cy="16" r="13.3" fill="none" stroke="#a6a8ad" stroke-width="3.4"/><path d="M15.9 10.3 V21.7 M10.2 16 H21.6" stroke="#a6a8ad" stroke-width="3.9" stroke-linecap="round"/></svg>
<div class="t" style="left:583.5px;top:1130.0px;line-height:40px;font-size:28px;color:#006dca;letter-spacing:-0.011px">bullet journal amazon<svg style="margin-left:9.5px;vertical-align:-1px" width="26" height="20" viewBox="0 0 26 20"><path d="M2.6 2.6 L10 10.2 L2.6 17.9 M13.7 2.6 L21.1 10.2 L13.7 17.9" fill="none" stroke="#a6a8ad" stroke-width="3.7" stroke-linecap="round" stroke-linejoin="round"/></svg></div>
<div class="a" style="left:1011px;top:1133.0px;width:30px;height:32px;border-radius:6px;background:#9cedc7;color:#50565c;font-size:22px;font-weight:bold;line-height:32px;text-align:center">T</div>
<div class="t" style="left:1106px;top:1129.3px;width:100px;text-align:right;line-height:40px;font-size:28.5px">320</div>
<div class="t" style="left:1220px;top:1129.3px;width:100px;text-align:right;line-height:40px;font-size:28.5px">29</div>
<div class="t" style="left:1420px;top:1129.3px;width:100px;text-align:right;line-height:40px;font-size:28.5px">0.31</div>
<div class="a" style="left:1337px;top:1137px;width:22px;height:22px;border-radius:50%;background:#5ad1a2"></div>
<svg class="a" style="left:1550px;top:1136px" width="32" height="30" viewBox="0 0 32 30"><g fill="#babdc4"><path d="M3 1.9 H29 Q30.15 1.9 30.15 3 V10.9 L27.2 7.8 H5.7 V23 H11.7 L14.7 26.65 H3 Q1.9 26.65 1.9 25.5 V3 Q1.9 1.9 3 1.9Z"/></g><circle cx="21.6" cy="17.8" r="4.55" fill="none" stroke="#babdc4" stroke-width="3.5"/><path d="M24.8 21 L28 24.2" stroke="#babdc4" stroke-width="3.5" stroke-linecap="round"/></svg>
<div class="a" style="left:1597px;top:1129px;width:3px;height:40px;background:#d5d8de"></div>
<div class="a" style="left:449px;top:1273px;width:1151px;height:2px;background:#dde0e8"></div>
<div class="a" style="left:485px;top:1214px;width:31px;height:32px;border:2px solid #c9ccd3;border-radius:7px;background:#fff"></div>
<svg class="a" style="left:545px;top:1216px" width="32" height="32" viewBox="0 0 32 32"><circle cx="15.9" cy="16" r="13.3" fill="none" stroke="#a6a8ad" stroke-width="3.4"/><path d="M15.9 10.3 V21.7 M10.2 16 H21.6" stroke="#a6a8ad" stroke-width="3.9" stroke-linecap="round"/></svg>
<div class="t" style="left:583.5px;top:1214.0px;line-height:40px;font-size:28px;color:#006dca;letter-spacing:0.188px">bullet journal bookshelf<svg style="margin-left:9.5px;vertical-align:-1px" width="26" height="20" viewBox="0 0 26 20"><path d="M2.6 2.6 L10 10.2 L2.6 17.9 M13.7 2.6 L21.1 10.2 L13.7 17.9" fill="none" stroke="#a6a8ad" stroke-width="3.7" stroke-linecap="round" stroke-linejoin="round"/></svg></div>
<div class="a" style="left:1011px;top:1217.0px;width:30px;height:32px;border-radius:6px;background:#c2e0ff;color:#226fd8;font-size:22px;font-weight:bold;line-height:32px;text-align:center">I</div>
<div class="a" style="left:1049px;top:1217.0px;width:30px;height:32px;border-radius:6px;background:#9cedc7;color:#50565c;font-size:22px;font-weight:bold;line-height:32px;text-align:center">T</div>
<div class="t" style="left:1106px;top:1213.3px;width:100px;text-align:right;line-height:40px;font-size:28.5px">320</div>
<div class="t" style="left:1220px;top:1213.3px;width:100px;text-align:right;line-height:40px;font-size:28.5px">22</div>
<div class="t" style="left:1420px;top:1213.3px;width:100px;text-align:right;line-height:40px;font-size:28.5px">0.00</div>
<div class="a" style="left:1337px;top:1221px;width:22px;height:22px;border-radius:50%;background:#5ad1a2"></div>
<svg class="a" style="left:1550px;top:1220px" width="32" height="30" viewBox="0 0 32 30"><g fill="#babdc4"><path d="M3 1.9 H29 Q30.15 1.9 30.15 3 V10.9 L27.2 7.8 H5.7 V23 H11.7 L14.7 26.65 H3 Q1.9 26.65 1.9 25.5 V3 Q1.9 1.9 3 1.9Z"/></g><circle cx="21.6" cy="17.8" r="4.55" fill="none" stroke="#babdc4" stroke-width="3.5"/><path d="M24.8 21 L28 24.2" stroke="#babdc4" stroke-width="3.5" stroke-linecap="round"/></svg>
<div class="a" style="left:1597px;top:1213px;width:3px;height:40px;background:#d5d8de"></div>
<div class="a" style="left:449px;top:1357px;width:1151px;height:2px;background:#dde0e8"></div>
<div class="a" style="left:485px;top:1298px;width:31px;height:32px;border:2px solid #c9ccd3;border-radius:7px;background:#fff"></div>
<svg class="a" style="left:545px;top:1300px" width="32" height="32" viewBox="0 0 32 32"><circle cx="15.9" cy="16" r="13.3" fill="none" stroke="#a6a8ad" stroke-width="3.4"/><path d="M15.9 10.3 V21.7 M10.2 16 H21.6" stroke="#a6a8ad" stroke-width="3.9" stroke-linecap="round"/></svg>
<div class="t" style="left:583.5px;top:1298.0px;line-height:40px;font-size:28px;color:#006dca;letter-spacing:0.218px">bullet journal target<svg style="margin-left:9.5px;vertical-align:-1px" width="26" height="20" viewBox="0 0 26 20"><path d="M2.6 2.6 L10 10.2 L2.6 17.9 M13.7 2.6 L21.1 10.2 L13.7 17.9" fill="none" stroke="#a6a8ad" stroke-width="3.7" stroke-linecap="round" stroke-linejoin="round"/></svg></div>
<div class="a" style="left:1011px;top:1301.0px;width:30px;height:32px;border-radius:6px;background:#ead6ff;color:#8047e6;font-size:22px;font-weight:bold;line-height:32px;text-align:center">N</div>
<div class="a" style="left:1049px;top:1301.0px;width:30px;height:32px;border-radius:6px;background:#9cedc7;color:#50565c;font-size:22px;font-weight:bold;line-height:32px;text-align:center">T</div>
<div class="t" style="left:1106px;top:1297.3px;width:100px;text-align:right;line-height:40px;font-size:28.5px">320</div>
<div class="t" style="left:1220px;top:1297.3px;width:100px;text-align:right;line-height:40px;font-size:28.5px">27</div>
<div class="t" style="left:1420px;top:1297.3px;width:100px;text-align:right;line-height:40px;font-size:28.5px">0.00</div>
<div class="a" style="left:1337px;top:1305px;width:22px;height:22px;border-radius:50%;background:#5ad1a2"></div>
<svg class="a" style="left:1550px;top:1304px" width="32" height="30" viewBox="0 0 32 30"><g fill="#babdc4"><path d="M3 1.9 H29 Q30.15 1.9 30.15 3 V10.9 L27.2 7.8 H5.7 V23 H11.7 L14.7 26.65 H3 Q1.9 26.65 1.9 25.5 V3 Q1.9 1.9 3 1.9Z"/></g><circle cx="21.6" cy="17.8" r="4.55" fill="none" stroke="#babdc4" stroke-width="3.5"/><path d="M24.8 21 L28 24.2" stroke="#babdc4" stroke-width="3.5" stroke-linecap="round"/></svg>
<div class="a" style="left:1597px;top:1297px;width:3px;height:40px;background:#d5d8de"></div>
<div class="a" style="left:449px;top:1441px;width:1151px;height:2px;background:#dde0e8"></div>
<div class="a" style="left:485px;top:1382px;width:31px;height:32px;border:2px solid #c9ccd3;border-radius:7px;background:#fff"></div>
<svg class="a" style="left:545px;top:1384px" width="32" height="32" viewBox="0 0 32 32"><circle cx="15.9" cy="16" r="13.3" fill="none" stroke="#a6a8ad" stroke-width="3.4"/><path d="M15.9 10.3 V21.7 M10.2 16 H21.6" stroke="#a6a8ad" stroke-width="3.9" stroke-linecap="round"/></svg>
<div class="t" style="left:583.5px;top:1382.0px;line-height:40px;font-size:28px;color:#006dca;letter-spacing:0.134px">books bullet journal<svg style="margin-left:9.5px;vertical-align:-1px" width="26" height="20" viewBox="0 0 26 20"><path d="M2.6 2.6 L10 10.2 L2.6 17.9 M13.7 2.6 L21.1 10.2 L13.7 17.9" fill="none" stroke="#a6a8ad" stroke-width="3.7" stroke-linecap="round" stroke-linejoin="round"/></svg></div>
<div class="a" style="left:1011px;top:1385.0px;width:30px;height:32px;border-radius:6px;background:#c2e0ff;color:#226fd8;font-size:22px;font-weight:bold;line-height:32px;text-align:center">I</div>
<div class="a" style="left:1049px;top:1385.0px;width:30px;height:32px;border-radius:6px;background:#9cedc7;color:#50565c;font-size:22px;font-weight:bold;line-height:32px;text-align:center">T</div>
<div class="t" style="left:1106px;top:1381.3px;width:100px;text-align:right;line-height:40px;font-size:28.5px">260</div>
<div class="t" style="left:1220px;top:1381.3px;width:100px;text-align:right;line-height:40px;font-size:28.5px">36</div>
<div class="t" style="left:1420px;top:1381.3px;width:100px;text-align:right;line-height:40px;font-size:28.5px">0.54</div>
<div class="a" style="left:1337px;top:1389px;width:22px;height:22px;border-radius:50%;background:#ffcf63"></div>
<svg class="a" style="left:1550px;top:1388px" width="32" height="30" viewBox="0 0 32 30"><g fill="#babdc4"><path d="M3 1.9 H29 Q30.15 1.9 30.15 3 V10.9 L27.2 7.8 H5.7 V23 H11.7 L14.7 26.65 H3 Q1.9 26.65 1.9 25.5 V3 Q1.9 1.9 3 1.9Z"/></g><circle cx="21.6" cy="17.8" r="4.55" fill="none" stroke="#babdc4" stroke-width="3.5"/><path d="M24.8 21 L28 24.2" stroke="#babdc4" stroke-width="3.5" stroke-linecap="round"/></svg>
<div class="a" style="left:1597px;top:1381px;width:3px;height:40px;background:#d5d8de"></div>
<div class="a" style="left:449px;top:1525px;width:1151px;height:2px;background:#dde0e8"></div>
<div class="a" style="left:485px;top:1466px;width:31px;height:32px;border:2px solid #c9ccd3;border-radius:7px;background:#fff"></div>
<svg class="a" style="left:545px;top:1468px" width="32" height="32" viewBox="0 0 32 32"><circle cx="15.9" cy="16" r="13.3" fill="none" stroke="#a6a8ad" stroke-width="3.4"/><path d="M15.9 10.3 V21.7 M10.2 16 H21.6" stroke="#a6a8ad" stroke-width="3.9" stroke-linecap="round"/></svg>
<div class="t" style="left:583.5px;top:1466.0px;line-height:40px;font-size:28px;color:#006dca;letter-spacing:0.226px">leuchtturm bullet journal<svg style="margin-left:9.5px;vertical-align:-1px" width="26" height="20" viewBox="0 0 26 20"><path d="M2.6 2.6 L10 10.2 L2.6 17.9 M13.7 2.6 L21.1 10.2 L13.7 17.9" fill="none" stroke="#a6a8ad" stroke-width="3.7" stroke-linecap="round" stroke-linejoin="round"/></svg></div>
<div class="a" style="left:1011px;top:1469.0px;width:30px;height:32px;border-radius:6px;background:#9cedc7;color:#50565c;font-size:22px;font-weight:bold;line-height:32px;text-align:center">T</div>
<div class="t" style="left:1106px;top:1465.3px;width:100px;text-align:right;line-height:40px;font-size:28.5px">260</div>
<div class="t" style="left:1220px;top:1465.3px;width:100px;text-align:right;line-height:40px;font-size:28.5px">23</div>
<div class="t" style="left:1420px;top:1465.3px;width:100px;text-align:right;line-height:40px;font-size:28.5px">0.45</div>
<div class="a" style="left:1337px;top:1473px;width:22px;height:22px;border-radius:50%;background:#c9ccd3"></div>
<svg class="a" style="left:1550px;top:1472px" width="32" height="30" viewBox="0 0 32 30"><g fill="#babdc4"><path d="M3 1.9 H29 Q30.15 1.9 30.15 3 V10.9 L27.2 7.8 H5.7 V23 H11.7 L14.7 26.65 H3 Q1.9 26.65 1.9 25.5 V3 Q1.9 1.9 3 1.9Z"/></g><circle cx="21.6" cy="17.8" r="4.55" fill="none" stroke="#babdc4" stroke-width="3.5"/><path d="M24.8 21 L28 24.2" stroke="#babdc4" stroke-width="3.5" stroke-linecap="round"/></svg>
<div class="a" style="left:1597px;top:1465px;width:3px;height:40px;background:#d5d8de"></div>
<div class="a" style="left:0;top:1349px;width:1600px;height:162px;background:linear-gradient(to bottom,rgba(255,255,255,0) 0%,rgba(255,255,255,0.93) 82%,rgba(255,255,255,1) 100%)"></div>
<div class="a" style="left:1525px;top:356px;width:66px;height:52px;border-radius:0 12px 12px 0;background:linear-gradient(to right,rgba(255,255,255,0),rgba(255,255,255,0.45))"></div>
<div class="a" style="left:1540px;top:440px;width:60px;height:1071px;background:linear-gradient(to right,rgba(255,255,255,0),rgba(255,255,255,0.5))"></div>
<svg class="a" style="left:0;top:0;z-index:1000" width="1600" height="1511"><path fill-rule="evenodd" fill="rgba(0,0,0,0.25)" d="M0 0 H1600 V1511 H0 Z M460 603 H1002 V1511 H460 Z M395 355 H710 A12 12 0 0 1 722 367 V397 A12 12 0 0 1 710 409 H395 A12 12 0 0 1 383 397 V367 A12 12 0 0 1 395 355 Z"/></svg>
</body></html>
